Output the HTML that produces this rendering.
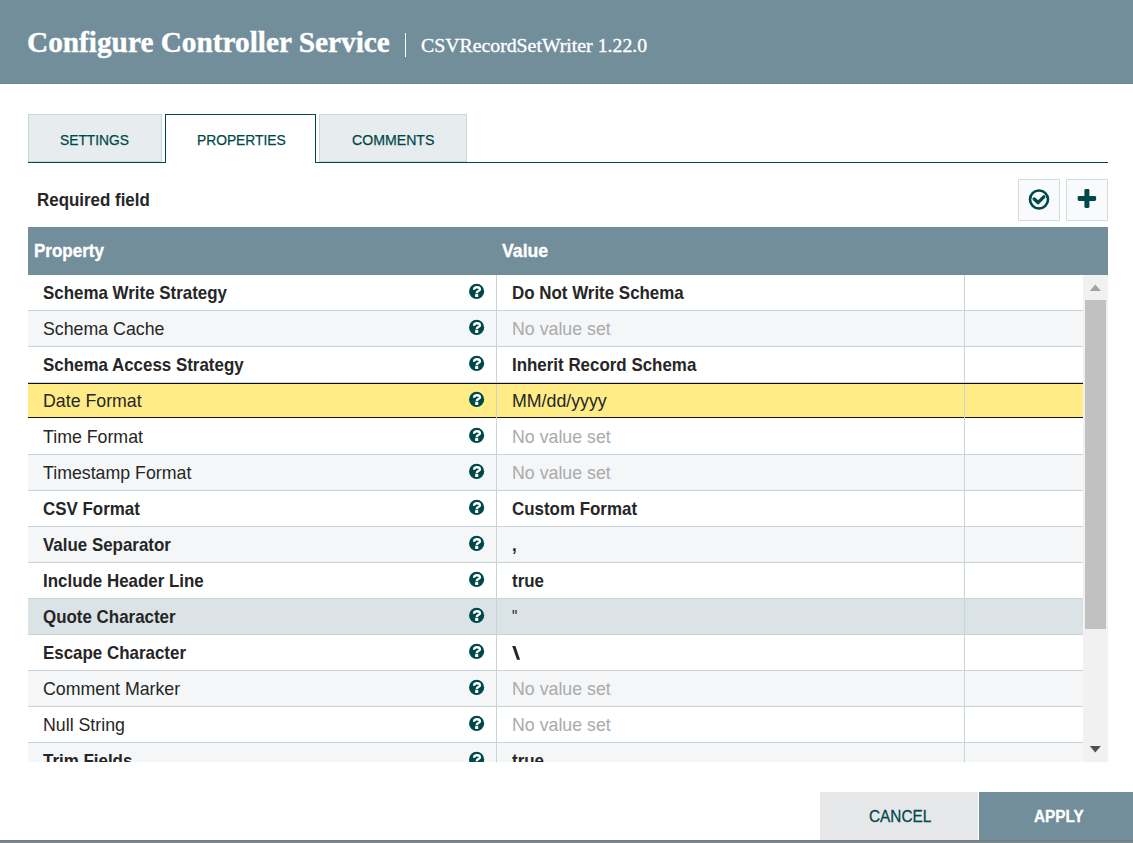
<!DOCTYPE html>
<html><head><meta charset="utf-8">
<style>
*{box-sizing:border-box;margin:0;padding:0}
html,body{width:1133px;height:843px;overflow:hidden;background:#fff;font-family:"Liberation Sans",sans-serif;position:relative}
.abs{position:absolute}
.t{position:absolute;white-space:nowrap;transform-origin:0 50%}
#hdr{left:0;top:0;width:1133px;height:84px;background:#728e9b}
#title{left:26.8px;top:23.9px;font-family:"Liberation Serif",serif;font-weight:bold;font-size:29.8px;color:#fff;line-height:36px;transform:scaleX(0.983);-webkit-text-stroke:0.4px #fff}
#sep{left:405px;top:33px;width:1px;height:24px;background:#fff}
#sub{left:421px;top:33.3px;font-family:"Liberation Serif",serif;font-size:19.8px;color:#fff;line-height:24px;-webkit-text-stroke:0.35px #fff}
.tab{position:absolute;top:114px;height:48px;border:1px solid #cad7da;background:#e7ecee}
.tt{color:#004849;font-size:15.2px;line-height:24px;top:128px;transform:scaleX(0.908);-webkit-text-stroke:0.25px #004849}
#tabline{left:28px;top:162px;width:1080px;height:1px;background:#004849}
#req{left:37px;top:187.5px;font-weight:bold;font-size:18.6px;color:#262626;line-height:24px;transform:scaleX(0.91)}
.btn{position:absolute;top:179px;width:42px;height:42px;border:1px solid #cfdede;background:#f9fafb}
.ic{position:absolute}
#thead{left:28px;top:227px;width:1080px;height:48px;background:#728e9b}
.th{top:227px;color:#fff;font-weight:bold;font-size:18.6px;line-height:48px;transform:scaleX(0.915);-webkit-text-stroke:0.35px #fff}
#grid{left:28px;top:275px;width:1055px;height:487px;overflow:hidden}
.row{position:absolute;left:0;width:1055px;height:36px;border-bottom:1px solid #c8d4d9}
.row span{position:absolute;top:0;font-size:18.6px;line-height:36px;color:#262626;white-space:nowrap;transform-origin:0 50%;transform:scaleX(0.955)}
.row span.b{font-weight:bold;transform:scaleX(0.91)}
.row .p{left:15px}
.row .v{left:484px}
.row .nv{color:#aaa}
.row .q{position:absolute;left:440px;top:8px;width:17px;height:17px}
.row .d1{position:absolute;left:468px;top:0;width:1px;height:36px;background:#c8d4d9}
.row .d2{position:absolute;left:936px;top:0;width:1px;height:36px;background:#c8d4d9}
.odd{background:#f4f6f7}
.row.yel{background:#ffec86;border-top:1px solid #111;border-bottom:1px solid #111;height:35px}
.row.yel span,.row.yel .q{margin-top:-1px}
.row.sel{background:#dce3e6}
#sb{left:1083px;top:275px;width:25px;height:487px;background:#f1f1f1}
#thumb{left:1085px;top:300px;width:21px;height:329px;background:#c1c1c1}
#cancel{left:820px;top:792px;width:158px;height:48px;background:#e6e7e8}
#apply{left:979px;top:792px;width:154px;height:48px;background:#728e9b}
.fb{top:804px;font-size:17.2px;line-height:24px;transform:scaleX(0.893);-webkit-text-stroke:0.3px currentColor}
#bot{left:0;top:840px;width:1133px;height:3px;background:#7b888e;border-top:1px solid #717c83}
#hline{left:0;top:83px;width:1133px;height:1px;background:#6a8794}
</style></head><body>
<div id="hdr" class="abs"></div><div id="hline" class="abs"></div>
<div id="title" class="t">Configure Controller Service</div>
<div id="sep" class="abs"></div>
<div id="sub" class="t">CSVRecordSetWriter 1.22.0</div>

<div class="tab" style="left:28px;width:134px"></div>
<div id="tabline" class="abs"></div>
<div class="tab" style="left:165px;width:151px;height:49px;border-color:#004849;border-bottom:none;background:#fff"></div>
<div class="tab" style="left:319px;width:148px"></div>
<div class="t tt" style="left:60px">SETTINGS</div>
<div class="t tt" style="left:197px">PROPERTIES</div>
<div class="t tt" style="left:352px;transform:scaleX(0.93)">COMMENTS</div>

<div id="req" class="t">Required field</div>
<div class="btn" style="left:1018px"></div>
<div class="btn" style="left:1066px"></div>
<svg class="ic" style="left:1027px;top:188px" width="24" height="24" viewBox="0 0 24 24"><circle cx="12" cy="11.5" r="9" fill="none" stroke="#004849" stroke-width="2.6"/><path d="M7.2 11 L11 14.6 L16.8 8.9" fill="none" stroke="#004849" stroke-width="3.4" stroke-linecap="round" stroke-linejoin="round"/></svg>
<svg class="ic" style="left:1075px;top:187px" width="24" height="24" viewBox="0 0 24 24"><rect x="2.7" y="8.9" width="18.4" height="5" rx="1.3" fill="#004849"/><rect x="9.4" y="1.9" width="5" height="19" rx="1.3" fill="#004849"/></svg>

<div id="thead" class="abs"></div>
<div class="t th" style="left:34px">Property</div>
<div class="t th" style="left:501.6px;transform:scaleX(0.95)">Value</div>

<div id="grid" class="abs">
<div class="row " style="top:0px"><span class="p b">Schema Write Strategy</span><svg class="q" width="17" height="17" viewBox="0 0 17 17"><circle cx="8.6" cy="8.45" r="7.6" fill="#004849"/><path d="M6.05 6.7 C6.05 4.9 7.3 4.25 8.9 4.25 C10.7 4.25 11.95 5.3 11.95 6.5 C11.95 8.1 8.75 8.0 8.75 9.9" fill="none" stroke="#fff" stroke-width="2.3"/><rect x="7.15" y="10.75" width="3.1" height="3.2" fill="#fff"/></svg><span class="v b">Do Not Write Schema</span><i class="d1"></i><i class="d2"></i></div>
<div class="row odd" style="top:36px"><span class="p">Schema Cache</span><svg class="q" width="17" height="17" viewBox="0 0 17 17"><circle cx="8.6" cy="8.45" r="7.6" fill="#004849"/><path d="M6.05 6.7 C6.05 4.9 7.3 4.25 8.9 4.25 C10.7 4.25 11.95 5.3 11.95 6.5 C11.95 8.1 8.75 8.0 8.75 9.9" fill="none" stroke="#fff" stroke-width="2.3"/><rect x="7.15" y="10.75" width="3.1" height="3.2" fill="#fff"/></svg><span class="v nv">No value set</span><i class="d1"></i><i class="d2"></i></div>
<div class="row " style="top:72px"><span class="p b">Schema Access Strategy</span><svg class="q" width="17" height="17" viewBox="0 0 17 17"><circle cx="8.6" cy="8.45" r="7.6" fill="#004849"/><path d="M6.05 6.7 C6.05 4.9 7.3 4.25 8.9 4.25 C10.7 4.25 11.95 5.3 11.95 6.5 C11.95 8.1 8.75 8.0 8.75 9.9" fill="none" stroke="#fff" stroke-width="2.3"/><rect x="7.15" y="10.75" width="3.1" height="3.2" fill="#fff"/></svg><span class="v b">Inherit Record Schema</span><i class="d1"></i><i class="d2"></i></div>
<div class="row yel" style="top:108px"><span class="p">Date Format</span><svg class="q" width="17" height="17" viewBox="0 0 17 17"><circle cx="8.6" cy="8.45" r="7.6" fill="#004849"/><path d="M6.05 6.7 C6.05 4.9 7.3 4.25 8.9 4.25 C10.7 4.25 11.95 5.3 11.95 6.5 C11.95 8.1 8.75 8.0 8.75 9.9" fill="none" stroke="#fff" stroke-width="2.3"/><rect x="7.15" y="10.75" width="3.1" height="3.2" fill="#fff"/></svg><span class="v">MM/dd/yyyy</span><i class="d1"></i><i class="d2"></i></div>
<div class="row " style="top:144px"><span class="p">Time Format</span><svg class="q" width="17" height="17" viewBox="0 0 17 17"><circle cx="8.6" cy="8.45" r="7.6" fill="#004849"/><path d="M6.05 6.7 C6.05 4.9 7.3 4.25 8.9 4.25 C10.7 4.25 11.95 5.3 11.95 6.5 C11.95 8.1 8.75 8.0 8.75 9.9" fill="none" stroke="#fff" stroke-width="2.3"/><rect x="7.15" y="10.75" width="3.1" height="3.2" fill="#fff"/></svg><span class="v nv">No value set</span><i class="d1"></i><i class="d2"></i></div>
<div class="row odd" style="top:180px"><span class="p">Timestamp Format</span><svg class="q" width="17" height="17" viewBox="0 0 17 17"><circle cx="8.6" cy="8.45" r="7.6" fill="#004849"/><path d="M6.05 6.7 C6.05 4.9 7.3 4.25 8.9 4.25 C10.7 4.25 11.95 5.3 11.95 6.5 C11.95 8.1 8.75 8.0 8.75 9.9" fill="none" stroke="#fff" stroke-width="2.3"/><rect x="7.15" y="10.75" width="3.1" height="3.2" fill="#fff"/></svg><span class="v nv">No value set</span><i class="d1"></i><i class="d2"></i></div>
<div class="row " style="top:216px"><span class="p b">CSV Format</span><svg class="q" width="17" height="17" viewBox="0 0 17 17"><circle cx="8.6" cy="8.45" r="7.6" fill="#004849"/><path d="M6.05 6.7 C6.05 4.9 7.3 4.25 8.9 4.25 C10.7 4.25 11.95 5.3 11.95 6.5 C11.95 8.1 8.75 8.0 8.75 9.9" fill="none" stroke="#fff" stroke-width="2.3"/><rect x="7.15" y="10.75" width="3.1" height="3.2" fill="#fff"/></svg><span class="v b">Custom Format</span><i class="d1"></i><i class="d2"></i></div>
<div class="row odd" style="top:252px"><span class="p b">Value Separator</span><svg class="q" width="17" height="17" viewBox="0 0 17 17"><circle cx="8.6" cy="8.45" r="7.6" fill="#004849"/><path d="M6.05 6.7 C6.05 4.9 7.3 4.25 8.9 4.25 C10.7 4.25 11.95 5.3 11.95 6.5 C11.95 8.1 8.75 8.0 8.75 9.9" fill="none" stroke="#fff" stroke-width="2.3"/><rect x="7.15" y="10.75" width="3.1" height="3.2" fill="#fff"/></svg><span class="v b">,</span><i class="d1"></i><i class="d2"></i></div>
<div class="row " style="top:288px"><span class="p b">Include Header Line</span><svg class="q" width="17" height="17" viewBox="0 0 17 17"><circle cx="8.6" cy="8.45" r="7.6" fill="#004849"/><path d="M6.05 6.7 C6.05 4.9 7.3 4.25 8.9 4.25 C10.7 4.25 11.95 5.3 11.95 6.5 C11.95 8.1 8.75 8.0 8.75 9.9" fill="none" stroke="#fff" stroke-width="2.3"/><rect x="7.15" y="10.75" width="3.1" height="3.2" fill="#fff"/></svg><span class="v b">true</span><i class="d1"></i><i class="d2"></i></div>
<div class="row sel" style="top:324px"><span class="p b">Quote Character</span><svg class="q" width="17" height="17" viewBox="0 0 17 17"><circle cx="8.6" cy="8.45" r="7.6" fill="#004849"/><path d="M6.05 6.7 C6.05 4.9 7.3 4.25 8.9 4.25 C10.7 4.25 11.95 5.3 11.95 6.5 C11.95 8.1 8.75 8.0 8.75 9.9" fill="none" stroke="#fff" stroke-width="2.3"/><rect x="7.15" y="10.75" width="3.1" height="3.2" fill="#fff"/></svg><span class="v b" style="font-weight:normal;transform:scaleX(0.8);margin-top:-0.5px">&quot;</span><i class="d1"></i><i class="d2"></i></div>
<div class="row " style="top:360px"><span class="p b">Escape Character</span><svg class="q" width="17" height="17" viewBox="0 0 17 17"><circle cx="8.6" cy="8.45" r="7.6" fill="#004849"/><path d="M6.05 6.7 C6.05 4.9 7.3 4.25 8.9 4.25 C10.7 4.25 11.95 5.3 11.95 6.5 C11.95 8.1 8.75 8.0 8.75 9.9" fill="none" stroke="#fff" stroke-width="2.3"/><rect x="7.15" y="10.75" width="3.1" height="3.2" fill="#fff"/></svg><svg style="position:absolute;left:0;top:0" width="600" height="36"><polygon points="484.2,10.9 487.4,10.9 492.1,24.8 489,24.8" fill="#262626"/></svg><i class="d1"></i><i class="d2"></i></div>
<div class="row odd" style="top:396px"><span class="p">Comment Marker</span><svg class="q" width="17" height="17" viewBox="0 0 17 17"><circle cx="8.6" cy="8.45" r="7.6" fill="#004849"/><path d="M6.05 6.7 C6.05 4.9 7.3 4.25 8.9 4.25 C10.7 4.25 11.95 5.3 11.95 6.5 C11.95 8.1 8.75 8.0 8.75 9.9" fill="none" stroke="#fff" stroke-width="2.3"/><rect x="7.15" y="10.75" width="3.1" height="3.2" fill="#fff"/></svg><span class="v nv">No value set</span><i class="d1"></i><i class="d2"></i></div>
<div class="row " style="top:432px"><span class="p">Null String</span><svg class="q" width="17" height="17" viewBox="0 0 17 17"><circle cx="8.6" cy="8.45" r="7.6" fill="#004849"/><path d="M6.05 6.7 C6.05 4.9 7.3 4.25 8.9 4.25 C10.7 4.25 11.95 5.3 11.95 6.5 C11.95 8.1 8.75 8.0 8.75 9.9" fill="none" stroke="#fff" stroke-width="2.3"/><rect x="7.15" y="10.75" width="3.1" height="3.2" fill="#fff"/></svg><span class="v nv">No value set</span><i class="d1"></i><i class="d2"></i></div>
<div class="row odd" style="top:468px"><span class="p b">Trim Fields</span><svg class="q" width="17" height="17" viewBox="0 0 17 17"><circle cx="8.6" cy="8.45" r="7.6" fill="#004849"/><path d="M6.05 6.7 C6.05 4.9 7.3 4.25 8.9 4.25 C10.7 4.25 11.95 5.3 11.95 6.5 C11.95 8.1 8.75 8.0 8.75 9.9" fill="none" stroke="#fff" stroke-width="2.3"/><rect x="7.15" y="10.75" width="3.1" height="3.2" fill="#fff"/></svg><span class="v b">true</span><i class="d1"></i><i class="d2"></i></div>
</div>
<div id="sb" class="abs"></div>
<div id="thumb" class="abs"></div>
<svg class="abs" style="left:1083px;top:275px" width="25" height="487" viewBox="0 0 25 487"><path d="M6.8 16 L12.3 9.6 L17.9 16 Z" fill="#a3a3a3"/><path d="M6.8 471 L12.3 477.4 L17.9 471 Z" fill="#505050"/></svg>

<div id="cancel" class="abs"></div>
<div id="apply" class="abs"></div>
<div class="t fb" style="left:869px;color:#004849">CANCEL</div>
<div class="t fb" style="left:1034px;color:#fff;font-weight:bold">APPLY</div>
<div id="bot" class="abs"></div>
</body></html>
